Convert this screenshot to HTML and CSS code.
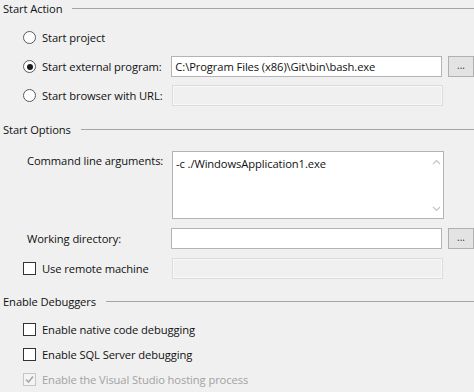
FILE: index.html
```html
<!DOCTYPE html>
<html lang="en">
<head>
    <meta charset="UTF-8">
    <title>Debug Options</title>
    <link rel="stylesheet" href="styles.css">
</head>
<body>
    <div class="page">
        <div class="section-head"><span>Start Action</span><div class="rule"></div></div>
        <div class="group action-group">
            <div class="row">
                <span class="radio"></span>
                <span class="label">Start project</span>
            </div>
            <div class="row">
                <span class="radio checked"></span>
                <span class="label">Start external program:</span>
                <div class="field">C:\Program Files (x86)\Git\bin\bash.exe</div>
                <button class="browse">...</button>
            </div>
            <div class="row">
                <span class="radio"></span>
                <span class="label">Start browser with URL:</span>
                <div class="field disabled"></div>
            </div>
        </div>

        <div class="section-head"><span>Start Options</span><div class="rule"></div></div>
        <div class="group options-group">
            <div class="row top">
                <span class="label wide">Command line arguments:</span>
                <div class="field area">
                    <span>-c ./WindowsApplication1.exe</span>
                    <div class="scroll">
                        <svg width="9" height="6" viewBox="0 0 9 6"><path d="M1 5 L4.5 1.5 L8 5" fill="none" stroke="#c4c4c4" stroke-width="1.2"/></svg>
                        <svg width="9" height="6" viewBox="0 0 9 6"><path d="M1 1 L4.5 4.5 L8 1" fill="none" stroke="#c4c4c4" stroke-width="1.2"/></svg>
                    </div>
                </div>
            </div>
            <div class="row">
                <span class="label wide">Working directory:</span>
                <div class="field"></div>
                <button class="browse">...</button>
            </div>
            <div class="row">
                <span class="check"></span>
                <span class="label">Use remote machine</span>
                <div class="field disabled"></div>
            </div>
        </div>

        <div class="section-head"><span>Enable Debuggers</span><div class="rule"></div></div>
        <div class="group debug-group">
            <div class="row short">
                <span class="check"></span>
                <span class="label">Enable native code debugging</span>
            </div>
            <div class="row short">
                <span class="check"></span>
                <span class="label">Enable SQL Server debugging</span>
            </div>
            <div class="row short muted">
                <span class="check disabled">
                    <svg width="11" height="11" viewBox="0 0 11 11"><path d="M2 5.5 L4.5 8 L9 2.5" fill="none" stroke="#a8a8a8" stroke-width="1.6"/></svg>
                </span>
                <span class="label">Enable the Visual Studio hosting process</span>
            </div>
        </div>
    </div>
</body>
</html>
```

FILE: styles.css
```css
html, body {
    margin: 0;
    padding: 0;
    background-color: #f0f0f0;
}
body {
    font-family: "Open Sans", "Noto Sans", sans-serif;
    font-size: 11.2px;
    letter-spacing: -0.1px;
    color: #111;
    overflow: hidden;
}
.page {
    width: 474px;
    height: 392px;
    overflow: hidden;
}
.section-head {
    display: flex;
    align-items: center;
    height: 16px;
    padding-left: 3px;
}
.section-head .rule {
    flex: 1;
    height: 1px;
    background-color: #a5a5a5;
    margin-left: 10px;
    margin-right: -10px;
}
.group {
    display: flex;
    flex-direction: column;
    padding-left: 23px;
}
.action-group {
    gap: 8px;
    margin-top: 11px;
    margin-bottom: 15px;
}
.options-group {
    gap: 9px;
    margin-top: 14px;
    margin-bottom: 14px;
}
.debug-group {
    gap: 7px;
    margin-top: 11px;
}
.row {
    display: flex;
    align-items: center;
    height: 21px;
}
.row.top {
    align-items: flex-start;
    height: 68px;
}
.row.short {
    height: 18px;
}
.label {
    width: 130px;
    white-space: nowrap;
}
.label.wide {
    width: 149px;
    padding-left: 4px;
    box-sizing: border-box;
}
.row.top .label {
    padding-top: 2px;
}
.radio, .check {
    width: 13px;
    height: 13px;
    box-sizing: border-box;
    margin-right: 6px;
    background-color: #fff;
    flex-shrink: 0;
}
.radio {
    border: 1px solid #5a5a5a;
    border-radius: 50%;
    position: relative;
}
.radio.checked::after {
    content: "";
    position: absolute;
    left: 2.5px;
    top: 2.5px;
    width: 6px;
    height: 6px;
    border-radius: 50%;
    background-color: #1a1a1a;
}
.check {
    border: 1px solid #333;
    display: flex;
    align-items: center;
    justify-content: center;
}
.check.disabled {
    border-color: #c6c6c6;
    background-color: #f4f4f4;
}
.muted {
    color: #a2a2a2;
}
.field {
    width: 272px;
    height: 21px;
    box-sizing: border-box;
    border: 1px solid #b4b4b4;
    background-color: #fff;
    padding: 0 3px;
    line-height: 19px;
    white-space: nowrap;
    overflow: hidden;
}
.field.disabled {
    border-color: #dcdcdc;
    background-color: #f0f0f0;
    box-shadow: inset 0 0 0 1px #f8f8f8;
    width: 271px;
}
.field.area {
    height: 68px;
    display: flex;
    justify-content: space-between;
    padding-top: 2px;
    padding-right: 0;
}
.scroll {
    width: 14px;
    display: flex;
    flex-direction: column;
    justify-content: space-between;
    align-items: center;
    padding: 5px 0 6px;
    box-sizing: border-box;
    height: 64px;
}
.scroll svg {
    display: block;
}
.browse {
    margin-left: 6px;
    width: 26px;
    height: 21px;
    box-sizing: border-box;
    border: 1px solid #b0b0b0;
    background-color: #e3e3e3;
    font-family: inherit;
    font-size: 10px;
    color: #333;
    padding: 0 0 4px;
    line-height: 10px;
    flex-shrink: 0;
}
```
